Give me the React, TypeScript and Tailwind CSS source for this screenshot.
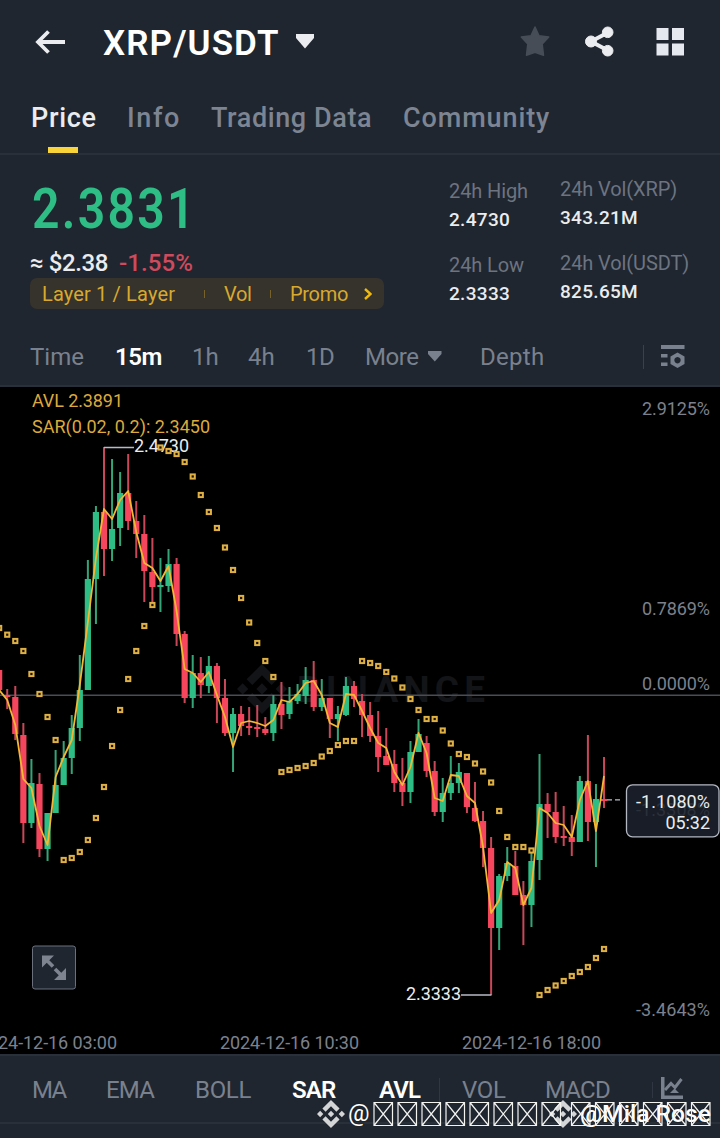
import { SiBinance } from "react-icons/si";

type Candle = [wickTop: number, bodyTop: number, bodyBottom: number, wickBottom: number, up: 0 | 1, avl: number, sar: number];

const FIRST = -13;
const candles: Candle[] = [
  [670, 670, 690, 692, 0, 690, 628],
  [689, 695, 697, 709, 0, 700, 634.7],
  [686, 697, 734, 740, 0, 725, 641],
  [723, 735, 823, 843, 0, 779, 651],
  [759, 783, 823, 828, 1, 788, 674],
  [773, 784, 849, 857, 0, 826, 694],
  [813, 813, 849, 861, 1, 845, 717],
  [750, 785, 813, 813, 1, 777, 740],
  [741, 758, 785, 785, 1, 757, 860],
  [715, 728, 758, 774, 1, 740, 858],
  [655, 690, 728, 741, 1, 685, 852],
  [560, 579, 690, 690, 1, 622, 840],
  [506, 512, 579, 624, 1, 558, 818],
  [447, 512, 549, 576, 0, 509, 787],
  [459, 529, 549, 561, 1, 519, 746],
  [472, 493, 528, 546, 1, 500, 710],
  [454, 493, 521, 530, 0, 491, 679],
  [501, 521, 534, 558, 0, 532, 651],
  [515, 534, 571, 602, 0, 563, 626],
  [538, 572, 587, 604, 0, 568, 605],
  [558, 585, 587, 612, 1, 581, 447.5],
  [549, 564, 586, 592, 1, 566, 451],
  [558, 564, 634, 646, 0, 611, 454],
  [631, 634, 698, 703, 0, 669, 462],
  [655, 673, 698, 708, 1, 673, 476.5],
  [657, 673, 685, 698, 0, 682, 495],
  [656, 666, 686, 693, 1, 672, 512],
  [663, 666, 698, 723, 0, 695, 528],
  [679, 698, 733, 736, 0, 717, 547.5],
  [708, 714, 733, 772, 1, 747, 570],
  [706, 714, 726, 736, 0, 723, 598],
  [707, 726, 728, 735, 0, 721, 622.5],
  [705, 727, 729, 737, 0, 723, 643],
  [717, 729, 733, 735, 0, 726, 661],
  [695, 704, 733, 741, 1, 720, 677],
  [682, 704, 715, 729, 0, 700, 772],
  [687, 701, 714, 719, 1, 702, 770],
  [684, 694, 701, 704, 1, 694, 768],
  [667, 680, 696, 704, 1, 683, 766],
  [661, 680, 707, 711, 0, 681, 763],
  [679, 698, 707, 711, 1, 695, 756.5],
  [698, 698, 719, 738, 0, 723, 751],
  [706, 714, 719, 741, 1, 727, 745],
  [677, 686, 715, 716, 1, 694, 741],
  [681, 686, 699, 707, 0, 695, 741],
  [694, 701, 715, 737, 0, 711, 661],
  [702, 715, 736, 742, 0, 728, 663],
  [711, 736, 757, 772, 0, 743, 666],
  [728, 756, 765, 765, 0, 748, 672],
  [750, 764, 783, 792, 0, 772, 678.5],
  [758, 783, 792, 806, 0, 785, 687.5],
  [741, 752, 792, 803, 1, 767, 699],
  [719, 734, 752, 752, 1, 733, 710],
  [736, 743, 771, 777, 0, 753, 719],
  [761, 771, 812, 816, 0, 798, 719],
  [778, 793, 812, 822, 1, 801, 730.5],
  [756, 783, 793, 800, 1, 775, 743.5],
  [763, 772, 783, 793, 1, 776, 754],
  [773, 773, 807, 813, 0, 796, 757],
  [782, 808, 821, 822, 0, 803, 763.5],
  [811, 821, 848, 867, 0, 847, 771.5],
  [837, 848, 928, 995, 0, 913, 782.5],
  [874, 876, 928, 950, 1, 900, 811],
  [847, 863, 876, 881, 1, 862, 837],
  [851, 866, 895, 895, 0, 868, 847],
  [881, 895, 905, 945, 0, 905, 847],
  [853, 861, 905, 927, 1, 888, 850.5],
  [754, 804, 860, 880, 1, 808, 995],
  [793, 804, 812, 838, 0, 813, 990],
  [792, 812, 837, 843, 0, 823, 985.5],
  [806, 836, 838, 846, 0, 825, 981],
  [815, 837, 842, 856, 0, 837, 976],
  [776, 781, 842, 842, 1, 800, 972],
  [735, 781, 822, 841, 0, 781, 967],
  [784, 799, 822, 867, 1, 831, 958],
  [757, 799, 801, 808, 0, 776, 949],
];

const xAt = (n: number) => 104 + 8.065 * (n + FIRST);
const avlPoints = candles.map((c, n) => `${xAt(n)},${c[5]}`).join(" ");

function Header() {
  return (
    <header className="h-[88px] flex items-center pb-[5px]">
      <svg className="ml-[34px] w-[32px] h-[26px]" viewBox="0 0 32 26" fill="none" stroke="#eaecef" strokeWidth="3.8">
        <path d="M31 13H4M14.5 2.5 4 13l10.5 10.5" />
      </svg>
      <h1 className="ml-[37px] pt-[5px] w-[193px] text-[35px] font-semibold tracking-[1.1px] text-white whitespace-nowrap">XRP/USDT</h1>
      <svg className="w-[18px] h-[15px]" viewBox="0 0 18 15" fill="#eaecef">
        <path d="M0 0h18v4L9 14.5 0 4z" />
      </svg>
      <svg className="ml-[206px] w-[30px] h-[31px]" viewBox="0 0 30 31" fill="#474d57" stroke="#474d57" strokeWidth="1.5" strokeLinejoin="round">
        <path d="M15 1l4 8.8 9.7 1.2-6.500 7 1.300 11.300L15 26.300 6.500 29.300l1.300-11.300-6.500-7L11 9.800z" />
      </svg>
      <svg className="ml-[35px] w-[29px] h-[31px]" viewBox="0 0 29 31" fill="#eaecef" stroke="#eaecef">
        <path d="M23 6.5 6 15.5 23 24.5" fill="none" strokeWidth="4" />
        <circle cx="22.7" cy="6.3" r="5.3" />
        <circle cx="6" cy="15.5" r="5.5" />
        <circle cx="22.7" cy="24.7" r="5.3" />
      </svg>
      <svg className="ml-[42px] w-[28px] h-[28px]" viewBox="0 0 28 28" fill="#e6e8f0">
        <path d="M.5 0h12v12h-12zM16 0h12v12h-12zM.5 15.5h12v12h-12zM16 15.5h12v12h-12z" />
      </svg>
    </header>
  );
}

function Tabs() {
  return (
    <nav className="h-[67px] flex pl-[31px] border-b-2 border-[#29303a] text-[27px] leading-[60px] font-medium text-[#7d8492] whitespace-nowrap">
      <div className="w-[96px] flex flex-col text-[#eaecef]">
        <span className="h-[59px] tracking-[0.7px]">Price</span>
        <span className="ml-[17px] w-[30px] h-[6px] bg-[#f8d33a]" />
      </div>
      <span className="w-[84px] tracking-[1.6px]">Info</span>
      <span className="w-[192px] tracking-[0.6px]">Trading Data</span>
      <span className="tracking-[0.9px]">Community</span>
    </nav>
  );
}

function Stat({ label, value }: { label: string; value: string }) {
  return (
    <div className="h-[74px] whitespace-nowrap">
      <div className="text-[20px] leading-[28px] text-[#6d7480] tracking-[-0.1px]">{label}</div>
      <div className="text-[19px] leading-[29px] font-medium text-[#eaecef] tracking-[0.3px]">{value}</div>
    </div>
  );
}

function Summary() {
  return (
    <section className="h-[172px] flex">
      <div className="w-[449px] pl-[30px]">
        <div className="h-[92px] pt-[24px] pl-[2px] text-[56px] leading-[60px] font-semibold text-[#2ebd85]">
          <span className="inline-block origin-left scale-x-[0.86] tracking-[2.6px]">2.3831</span>
        </div>
        <div className="h-[31px] flex text-[24px] leading-[32px] font-medium whitespace-nowrap">
          <span className="w-[89px] text-[#eaecef] tracking-[-0.4px]">≈ $2.38</span>
          <span className="text-[#cf4a5c] tracking-[0.1px]">-1.55%</span>
        </div>
        <div className="w-[354px] h-[31px] rounded-[7px] bg-[#35332c] flex items-center pl-[12px] text-[20px] leading-[32px] text-[#d9a92e] whitespace-nowrap">
          <span className="w-[162px] tracking-[0.15px]">Layer 1 / Layer</span>
          <span className="w-px h-[8px] bg-[#77622c]" />
          <span className="ml-[19px] w-[46px] tracking-[-0.3px]">Vol</span>
          <span className="w-px h-[8px] bg-[#77622c]" />
          <span className="ml-[19px] w-[74px] tracking-[-0.3px]">Promo</span>
          <svg className="w-[8px] h-[12px]" viewBox="0 0 8 12" fill="none" stroke="#f0b90b" strokeWidth="2.4">
            <path d="M1 1l5.5 5L1 11" />
          </svg>
        </div>
      </div>
      <div className="w-[111px] pt-[22px]">
        <Stat label="24h High" value="2.4730" />
        <Stat label="24h Low" value="2.3333" />
      </div>
      <div className="pt-[20px]">
        <Stat label="24h Vol(XRP)" value="343.21M" />
        <Stat label="24h Vol(USDT)" value="825.65M" />
      </div>
    </section>
  );
}

function Intervals() {
  return (
    <nav className="h-[60px] flex items-center pl-[30px] pt-[1px] border-b-2 border-[#29303a] text-[24px] leading-[58px] text-[#7a818e] whitespace-nowrap">
      <span className="w-[85px]">Time</span>
      <span className="w-[77px] font-semibold text-white tracking-[-0.5px]">15m</span>
      <span className="w-[56px]">1h</span>
      <span className="w-[58px]">4h</span>
      <span className="w-[59px] tracking-[-0.4px]">1D</span>
      <span className="w-[63px] tracking-[-0.4px]">More</span>
      <svg className="w-[14px] h-[11px]" viewBox="0 0 14 11" fill="#7a818e">
        <path d="M0 0h13.5v3L6.8 10.5 0 3z" />
      </svg>
      <span className="ml-[38px] w-[163px] tracking-[0.3px]">Depth</span>
      <span className="w-px h-[24px] bg-[#3a414c]" />
      <svg className="ml-[17px] w-[25px] h-[25px]" viewBox="0 0 25 25" fill="#7a818e">
        <path d="M0 1h23.5v4H0zM0 10h6.5v3.6H0zM0 18.5h6.5v3.6H0z" />
        <path fillRule="evenodd" d="M16.5 8.5l7 4v7.500l-7 4-7-4v-7.500zM16.500 13a3.200 3.200 0 1 0 .01 0z" />
      </svg>
    </nav>
  );
}

function Chart() {
  return (
    <section className="h-[667px] bg-black">
      <svg className="block w-[720px] h-[667px]" viewBox="0 387 720 667" fontSize="18">
        <svg x="237" y="664" width="50" height="50" viewBox="0 0 50 50">
          <SiBinance size={50} color="#131417" />
        </svg>
        <text x="297" y="702" fontSize="37" fontWeight="700" fill="#131417" textLength="188">BINANCE</text>
        <path d="M0 695.300H720" stroke="#4b4d55" strokeWidth="1.5" />
        {candles.map(([wt, bt, bb, wb, up], n) => (
          <g key={n}>
            <rect x={xAt(n) - 1} y={wt} width="2" height={wb - wt} fill={up ? "#35a578" : "#c94758"} />
            <rect x={xAt(n) - 3.1} y={bt} width="6.2" height={bb - bt} fill={up ? "#2ebd85" : "#f6465d"} />
          </g>
        ))}
        <polyline points={avlPoints} fill="none" stroke="#f3b734" strokeWidth="1.8" strokeLinejoin="round" />
        <path d="M104 447.500H134M461 995H491.500" stroke="#b7bac6" strokeWidth="1.3" />
        <text x="134" y="452" fill="#eaecef" textLength="55">2.4730</text>
        <text x="406" y="1000" fill="#eaecef" textLength="55">2.3333</text>
        {candles.map((c, n) => (
          <rect key={n} x={xAt(n) - 2.1} y={c[6] - 2.1} width="4.2" height="4.2" fill="#1c1200" stroke="#deb045" strokeWidth="2" />
        ))}
        <g fill="#dda93c">
          <text x="32" y="407" textLength="91">AVL 2.3891</text>
          <text x="32" y="433" textLength="178">SAR(0.02, 0.2): 2.3450</text>
        </g>
        <g fill="#7c818d">
          <text x="642" y="414.500" textLength="68">2.9125%</text>
          <text x="642" y="615" textLength="68">0.7869%</text>
          <text x="642" y="689.500" textLength="68">0.0000%</text>
          <text x="636" y="1016" textLength="74">-3.4643%</text>
          <text x="-22" y="1049" textLength="139">2024-12-16 03:00</text>
          <text x="220" y="1049" textLength="139">2024-12-16 10:30</text>
          <text x="462" y="1049" textLength="139">2024-12-16 18:00</text>
        </g>
        <path d="M607 799.800h5M615 799.800h5" stroke="#b9bcc4" strokeWidth="1.3" />
        <rect x="626.5" y="784.8" width="92.5" height="52" rx="6" fill="#181d27" stroke="#b4b8c2" strokeWidth="1.3" />
        <text x="636" y="816" fill="#2b313b" textLength="74">-1.3308%</text>
        <text x="636" y="807.500" fill="#eaecef" textLength="74">-1.1080%</text>
        <text x="665.5" y="829" fill="#eaecef" textLength="44.5">05:32</text>
        <rect x="32.5" y="946" width="43" height="43" rx="2.5" fill="#1f2630" stroke="#6a707c" />
        <g fill="#7f8590" stroke="#7f8590">
          <path stroke="none" d="M42 955.500h12L42 967.500zM66 980V968L54 980z" />
          <path d="M45.500 959l7.500 7.500M62.500 976.500 55 969" strokeWidth="3.6" />
        </g>
      </svg>
    </section>
  );
}

function Indicators() {
  return (
    <nav className="h-[70px] flex items-center pl-[32px] pt-[1px] border-y-2 border-[#29303a] text-[24px] leading-[64px] tracking-[-0.8px] text-[#7a818e] whitespace-nowrap">
      <span className="w-[74px] tracking-[-1.6px]">MA</span>
      <span className="w-[89px]">EMA</span>
      <span className="w-[97px] tracking-[-0.3px]">BOLL</span>
      <span className="w-[87px] font-semibold text-white">SAR</span>
      <span className="w-[60px] font-semibold text-white">AVL</span>
      <span className="w-px h-[24px] bg-[#303742]" />
      <span className="ml-[22px] w-[83px] tracking-[-0.3px]">VOL</span>
      <span className="w-[107px]">MACD</span>
      <span className="w-px h-[16px] bg-[#303742]" />
      <svg className="ml-[8px] mt-[-3px] w-[23px] h-[23px]" viewBox="0 0 23 23" fill="#7a818e">
        <path d="M0 0h3.5v18.5H22V22H0z" />
        <path d="M4 13l6-6.5 4 4L20.5 2" fill="none" stroke="#7a818e" strokeWidth="3" />
        <path d="M9 16l4.5-4.5L18 16z" />
      </svg>
    </nav>
  );
}

const boxes = [373.5, 397.5, 421.5, 445.5, 469.5, 493.5, 517.5, 541.5, 571, 595, 619, 643, 667, 691];

function Watermark() {
  return (
    <div className="absolute left-0 bottom-0 w-[720px] h-[44px] pointer-events-none">
      <svg className="block w-[720px] h-[44px]" viewBox="0 1094 720 44">
        <svg x="317" y="1100" width="28" height="28" viewBox="0 0 28 28">
          <SiBinance size={28} color="#d4d5d7" />
        </svg>
        <svg x="549" y="1100" width="28" height="28" viewBox="0 0 28 28">
          <SiBinance size={28} color="#d4d5d7" />
        </svg>
        <g fill="#ffffff" fontSize="23" stroke="#20242b" strokeWidth="2" paintOrder="stroke">
          <text x="348" y="1121" fontSize="24">@</text>
          <text x="580" y="1122" fontWeight="500" textLength="131" lengthAdjust="spacingAndGlyphs">@Mila Rose</text>
        </g>
        <g fill="none" stroke="#f3f3f0" strokeWidth="1.2">
          {boxes.map((x) => (
            <path key={x} d={`M${x + 0.5} 1102.500h18.500v23h-18.500zl18.500 23m0-23l-18.500 23`} />
          ))}
        </g>
      </svg>
    </div>
  );
}

export default function App() {
  return (
    <main className="relative w-[720px] h-[1138px] overflow-hidden bg-[#1f2630] font-['Roboto','Liberation_Sans',sans-serif]">
      <Header />
      <Tabs />
      <Summary />
      <Intervals />
      <Chart />
      <Indicators />
      <Watermark />
    </main>
  );
}
